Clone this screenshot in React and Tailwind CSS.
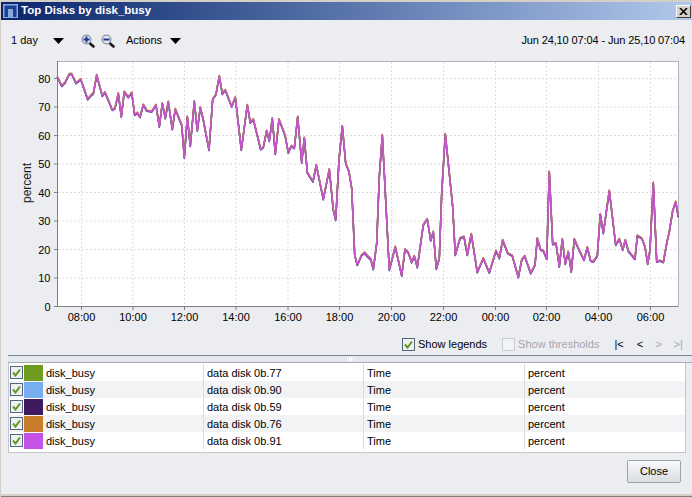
import { Fragment } from "react";

const leftTrace = [
  [22, 50], [35, 78], [45, 68], [58, 42], [65, 42], [78, 70], [92, 58], [113, 118], [125, 104], [130, 102],
  [140, 45], [157, 108], [165, 97], [187, 150], [195, 145], [205, 100], [214, 170], [223, 95], [235, 112], [245, 98],
  [254, 165], [262, 158], [270, 172], [280, 134], [290, 152], [305, 155], [318, 135], [328, 200], [337, 130], [346, 175],
  [355, 125], [367, 208], [376, 147], [395, 195], [403, 293], [412, 170], [421, 258], [433, 124], [442, 212], [451, 142],
  [460, 180], [477, 270], [488, 118], [498, 103], [508, 48], [517, 102], [526, 90], [545, 140], [556, 112], [565, 190],
  [574, 270], [592, 135], [601, 188], [610, 178], [632, 268], [640, 262], [650, 212], [658, 243], [667, 175], [676, 282],
  [687, 178], [705, 225], [715, 278], [724, 258], [733, 265], [743, 170], [755, 308], [763, 233], [772, 338], [789, 365],
  [799, 315], [820, 418], [838, 328], [850, 450], [857, 480], [867, 300], [877, 198], [887, 310], [897, 335], [905, 385],
  [914, 585], [922, 615], [935, 585], [945, 578], [960, 597],
];

const rightTrace = [
  [12, 578], [32, 597], [40, 628], [50, 550], [58, 350], [67, 225], [77, 420], [88, 630], [106, 560], [125, 647],
  [135, 568], [145, 578], [155, 607], [163, 588], [172, 622], [190, 495], [202, 477], [212, 542], [220, 515], [229, 627],
  [238, 595], [245, 400], [256, 222], [268, 340], [278, 440], [286, 585], [300, 535], [312, 530], [322, 585], [334, 522],
  [352, 637], [370, 595], [388, 638], [408, 572], [418, 595], [428, 540], [443, 580], [457, 587], [475, 652], [485, 600],
  [494, 588], [512, 640], [525, 615], [532, 535], [542, 570], [550, 572], [560, 597], [568, 335], [578, 553], [588, 550],
  [598, 620], [607, 537], [616, 612], [625, 575], [634, 635], [643, 537], [655, 565], [672, 600], [682, 562], [692, 603],
  [700, 605], [712, 588], [721, 462], [730, 520], [748, 392], [767, 555], [778, 537], [788, 570], [796, 540], [805, 573],
  [825, 597], [832, 527], [845, 535], [855, 560], [863, 612], [870, 570], [880, 368], [890, 605], [900, 602], [910, 607],
  [920, 550], [928, 515], [938, 452], [947, 425], [955, 470],
];

// traces were read off 3x crops, so convert back to page pixels
const trace = [
  ...leftTrace.map(([x, y]) => [50 + x / 3, 60 + y / 3]),
  ...rightTrace.map(([x, y]) => [360 + x / 3, 60 + y / 3]),
];

const toPoints = (dy) =>
  trace.map(([x, y]) => `${x.toFixed(1)},${(y + dy).toFixed(1)}`).join(" ");

const series = [
  { color: "#6f9c1f", dy: -0.5, opacity: 1 },
  { color: "#76aeef", dy: 0.5, opacity: 1 },
  { color: "#3f1a5e", dy: 0.4, opacity: 1 },
  { color: "#c97d28", dy: -0.5, opacity: 1 },
  { color: "#c452e6", dy: 0, opacity: 0.88 },
];

const yTicks = [0, 10, 20, 30, 40, 50, 60, 70, 80];
const xTicks = [
  ["08:00", 81.5], ["10:00", 133], ["12:00", 184.5], ["14:00", 236], ["16:00", 288], ["18:00", 339.5],
  ["20:00", 391.5], ["22:00", 443.5], ["00:00", 495.5], ["02:00", 546.5], ["04:00", 598.5], ["06:00", 650.5],
];

const yPos = (v) => 306 - v * 2.85;

function Chart() {
  return (
    <svg width="692" height="265" viewBox="0 60 692 265" className="block shrink-0">
      <rect x="57.5" y="61.5" width="621" height="245" fill="#fff" stroke="#b4b4b8" />
      {yTicks.slice(1).map((v) => (
        <line key={v} x1="58" x2="678" y1={yPos(v) + 0.5} y2={yPos(v) + 0.5} stroke="#dedede" strokeDasharray="2 2" />
      ))}
      {xTicks.map(([label, x]) => (
        <line key={label} x1={x} x2={x} y1="62" y2="306" stroke="#dedede" strokeDasharray="2 2" />
      ))}
      <line x1="57.5" x2="57.5" y1="61" y2="307" stroke="#808080" />
      <line x1="57" x2="678" y1="306.5" y2="306.5" stroke="#808080" />
      {yTicks.map((v) => (
        <Fragment key={v}>
          <line x1="54" x2="57" y1={yPos(v) + 0.5} y2={yPos(v) + 0.5} stroke="#808080" />
          <text x="50.5" y={yPos(v) + 4.5} textAnchor="end" fontSize="11" fill="#000">{v}</text>
        </Fragment>
      ))}
      {xTicks.map(([label, x]) => (
        <Fragment key={label}>
          <line x1={x} x2={x} y1="306" y2="310" stroke="#808080" />
          <text x={x} y="320.5" textAnchor="middle" fontSize="11" fill="#000">{label}</text>
        </Fragment>
      ))}
      <text transform="translate(31 183) rotate(-90)" textAnchor="middle" fontSize="12" fill="#222">percent</text>
      {series.map((s) => (
        <polyline
          key={s.color}
          points={toPoints(s.dy)}
          fill="none"
          stroke={s.color}
          strokeOpacity={s.opacity}
          strokeWidth="1.5"
          strokeLinejoin="round"
        />
      ))}
    </svg>
  );
}

function Magnifier({ minus }) {
  return (
    <svg width="14" height="14" viewBox="0 0 14 14" className="block">
      <line x1="8.5" y1="9" x2="12.5" y2="12.5" stroke="#1c1c1c" strokeWidth="2.6" strokeLinecap="round" />
      <circle cx="5.5" cy="5.5" r="4.4" fill="#dfe6f4" stroke="#8d95a3" strokeWidth="1.2" />
      <rect x="2.5" y="4.5" width="6" height="2" fill="#24358f" />
      {!minus && <rect x="4.5" y="2.5" width="2" height="6" fill="#24358f" />}
    </svg>
  );
}

function Caret() {
  return (
    <svg width="11" height="6" viewBox="0 0 11 6" className="block">
      <polygon points="0,0 11,0 5.5,6" fill="#000" />
    </svg>
  );
}

function Check() {
  return (
    <span className="flex h-[13px] w-[13px] shrink-0 items-center justify-center border border-[#53647f] bg-[#eef0f2]">
      <svg width="9" height="9" viewBox="0 0 9 9">
        <path d="M1 4.5 L3.5 7.5 L8 1.5" fill="none" stroke="#5f9a1e" strokeWidth="2" />
      </svg>
    </span>
  );
}

const rows = [
  { swatch: "bg-[#6f9c1f]", disk: "0b.77", stripe: false },
  { swatch: "bg-[#76aeef]", disk: "0b.90", stripe: true },
  { swatch: "bg-[#3f1a5e]", disk: "0b.59", stripe: false },
  { swatch: "bg-[#c97d28]", disk: "0b.76", stripe: true },
  { swatch: "bg-[#c452e6]", disk: "0b.91", stripe: false },
];

export default function App() {
  return (
    <div className="flex h-[497px] w-[692px] flex-col overflow-hidden border-l border-[#d4d0c8] bg-[#ebedf1] font-['Liberation_Sans',Arial,sans-serif] text-[11px] text-black">
      <div className="h-[2px] shrink-0 bg-[#d4d0c8]" />
      <header className="flex h-[18px] shrink-0 items-center bg-gradient-to-r from-[#0a246a] to-[#b3c9ec] pr-[1px] pl-[2px]">
        <svg width="15" height="14" viewBox="0 0 15 14" className="block shrink-0">
          <rect width="15" height="14" fill="#86abe0" />
          <path d="M1.5 13 V1.5 H13.5 V13 H10 V5 H5 V13 Z" fill="#1c3f94" />
        </svg>
        <span className="ml-[3px] text-[11.5px] font-bold text-white">Top Disks by disk_busy</span>
        <button className="ml-auto flex h-[13px] w-[15px] items-center justify-center border border-t-white border-r-[#404040] border-b-[#404040] border-l-white bg-[#d4d0c8]">
          <svg width="9" height="7" viewBox="0 0 9 7">
            <path d="M1 0 L8 7 M8 0 L1 7" stroke="#000" strokeWidth="1.6" />
          </svg>
        </button>
      </header>

      <div className="flex h-[40px] shrink-0 items-center pt-px pr-[7px] pl-[10px]">
        <span>1 day</span>
        <span className="ml-[15px]"><Caret /></span>
        <span className="ml-[17px]"><Magnifier /></span>
        <span className="ml-[6px]"><Magnifier minus /></span>
        <span className="ml-[11px]">Actions</span>
        <span className="ml-[8px]"><Caret /></span>
        <span className="ml-auto tracking-[-0.12px]">Jun 24,10 07:04 - Jun 25,10 07:04</span>
      </div>

      <div className="-ml-px">
        <Chart />
      </div>

      <div className="flex h-[30px] shrink-0 items-center pt-[8px] pl-[401px]">
        <Check />
        <span className="ml-[3px]">Show legends</span>
        <span className="ml-[15px] h-[13px] w-[13px] border border-[#c9ccd2] bg-[#f2f3f5]" />
        <span className="ml-[3px] text-[#a6a8ac]">Show thresholds</span>
        <span className="ml-[15px]">|&lt;</span>
        <span className="ml-[13px]">&lt;</span>
        <span className="ml-[12px] text-[#a6a8ac]">&gt;</span>
        <span className="ml-[12px] text-[#a6a8ac]">&gt;|</span>
      </div>

      <div className="ml-[7px] flex h-[8px] shrink-0 items-center justify-center border-t border-b border-t-[#7a8798] border-b-[#a9abaf] bg-[#e2e7f0]">
        <span className="flex gap-px">
          <span className="h-[4px] w-px bg-white" />
          <span className="h-[4px] w-px bg-white" />
          <span className="h-[4px] w-px bg-white" />
          <span className="h-[4px] w-px bg-white" />
        </span>
      </div>

      <div className="mr-[6px] ml-[7px] flex h-[90px] shrink-0 flex-col border-x border-b border-[#c4c5c8] bg-white pt-px">
        {rows.map((row) => (
          <div key={row.disk} className={`flex h-[17px] shrink-0 items-center ${row.stripe ? "bg-[#f2f3f5]" : "bg-white"}`}>
            <span className="flex h-full w-[15px] shrink-0 items-center justify-end pr-px">
              <Check />
            </span>
            <span className={`h-[16px] w-[19px] shrink-0 ${row.swatch}`} />
            <span className="flex h-full w-[161px] shrink-0 items-center border-r border-[#dcdcdc] pt-px pl-[3px]">disk_busy</span>
            <span className="flex h-full w-[160px] shrink-0 items-center border-r border-[#dcdcdc] pt-px pl-[3px]">data disk {row.disk}</span>
            <span className="flex h-full w-[161px] shrink-0 items-center border-r border-[#dcdcdc] pt-px pl-[3px]">Time</span>
            <span className="flex h-full flex-1 items-center pt-px pl-[3px]">percent</span>
          </div>
        ))}
      </div>

      <div className="flex flex-1 items-start justify-end pt-[7px] pr-[11px]">
        <button className="h-[23px] w-[54px] rounded-[2px] border border-[#9ea3aa] bg-gradient-to-b from-[#f8f9fa] to-[#d9dce1]">
          Close
        </button>
      </div>
      <div className="h-[2px] shrink-0 bg-[#d4d0c8]" />
      <div className="h-px shrink-0 bg-[#808080]" />
    </div>
  );
}
